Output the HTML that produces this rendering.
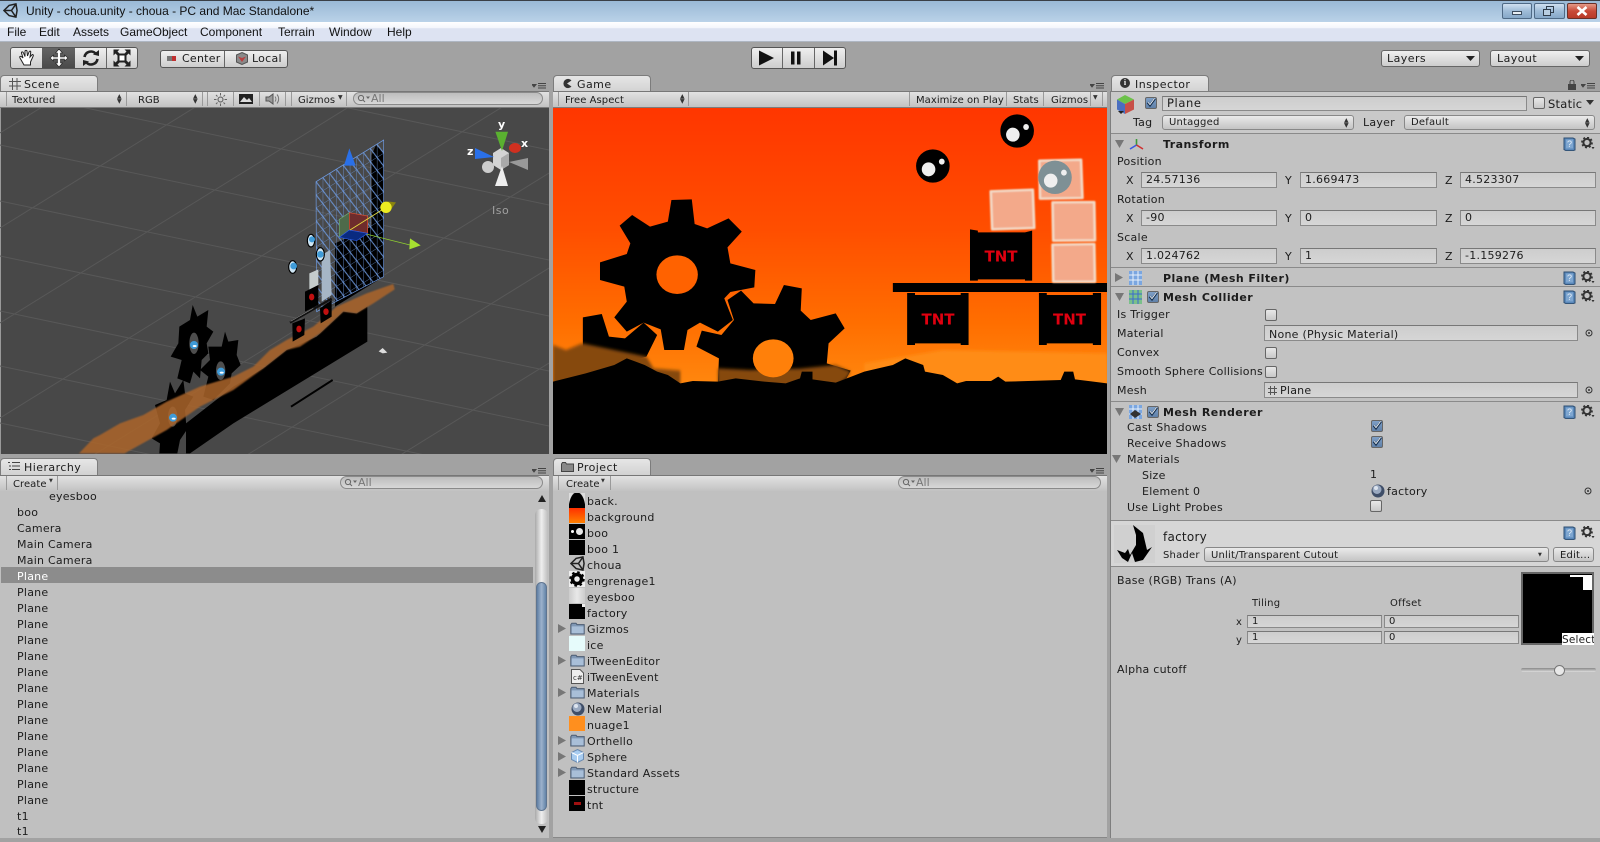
<!DOCTYPE html>
<html><head><meta charset="utf-8"><style>
html,body{margin:0;padding:0;width:1600px;height:842px;overflow:hidden;background:#a2a2a2}
body{position:relative;font:11px "DejaVu Sans",sans-serif;color:#1c1c1c}
div,span,svg{position:absolute}
.t{white-space:nowrap;line-height:16px;letter-spacing:.25px;color:#1c1c1c;margin-top:1px}
.s{font-size:10px;letter-spacing:.05px}
.m{white-space:nowrap;line-height:16px;font:12px/16px "Liberation Sans",sans-serif;top:24px;color:#111}
.b{font-weight:bold;letter-spacing:.45px}
.btn{background:linear-gradient(#efefef,#cdcdcd);border:1px solid #555;box-sizing:border-box}
.tab{background:linear-gradient(#e6e6e6,#d2d2d2);border:1px solid #7c7c7c;border-bottom:0;border-radius:4px 4px 0 0;box-sizing:border-box;height:17px}
.bar{background:linear-gradient(#e2e2e2,#c2c2c2);border-top:1px solid #777;border-bottom:1px solid #7c7c7c;box-sizing:border-box;height:17px}
.sep{width:1px;background:#9a9a9a;top:1px;height:14px}
.srch{height:13px;border:1px solid #8a8a8a;border-radius:7px;box-sizing:border-box;background:linear-gradient(#bdbdbd,#d8d8d8);color:#777;font-size:11px;line-height:12px;padding-left:17px}
.f{height:16px;box-sizing:border-box;background:linear-gradient(#cdcdcd,#d6d6d6);border:1px solid #8a8a8a;border-top-color:#777;line-height:14px;padding-left:4px;letter-spacing:.25px;white-space:nowrap;overflow:hidden}
.dd{height:15px;box-sizing:border-box;background:linear-gradient(#eaeaea,#c4c4c4);border:1px solid #888;border-radius:3px;line-height:14px;padding-left:6px;font-size:10px;letter-spacing:.2px}
.ln{height:1px;background:#8a8a8a;left:1111px;width:489px}
.cb{width:12px;height:12px;box-sizing:border-box;border:1px solid #666;border-radius:2px;background:linear-gradient(#e8e8e8,#c8c8c8)}
.ck{background:linear-gradient(#7e9fc6,#5f80a8)}
.arr{color:#333;font-size:7px;line-height:8px}
.w{top:3px;height:16px;box-sizing:border-box;border:1px solid #4f6a86;border-radius:2px;background:linear-gradient(#cfe0f0,#9fbcd8 50%,#86a8c8)}
.thumb{left:569px;width:16px;height:15px;background:#000}
</style></head><body>
<svg width="0" height="0" style="left:0;top:0"><defs>
<symbol id="help" viewBox="0 0 13 14"><path d="M1 1h9l2 1v11l-2 0.6H3l-2-1z" fill="#5a88ba" stroke="#2f4f72"/><rect x="3" y="2.5" width="7" height="9" fill="#7ea6d0"/><text x="6.5" y="10" font-size="9" text-anchor="middle" fill="#e8f0f8" font-family="Liberation Sans">?</text></symbol>
<symbol id="gear" viewBox="0 0 14 13"><circle cx="6" cy="5.5" r="3.6" fill="none" stroke="#333" stroke-width="2"/><circle cx="6" cy="5.5" r="5" fill="none" stroke="#333" stroke-width="1.8" stroke-dasharray="2 1.9"/><path d="M10.5 10h3l-1.5 2.2z" fill="#333"/></symbol>
<symbol id="tick" viewBox="0 0 12 12"><path d="M2.6 5.5 5 8.4 10 1.6" fill="none" stroke="#173150" stroke-width="2.2"/><path d="M3 5.2 5 7.6 9.6 1.4" fill="none" stroke="#fff" stroke-width=".8"/></symbol>
<symbol id="folder" viewBox="0 0 15 13"><path d="M.8 12V2.6l1-1.4h4.2l1 1.4h7.2V12z" fill="#7f97b4" stroke="#4c5c72"/><path d="M1.6 4.4h12V11.4H1.6z" fill="#a9bfd8"/></symbol>
<symbol id="unity" viewBox="0 0 16 16"><path d="M1 8 6.5 2.6 13.8 1 15 8 13.8 15 6.5 13.4z" fill="none" stroke="#222" stroke-width="1.6"/><path d="M1 8H9L13.8 1M9 8 13.8 15" fill="none" stroke="#222" stroke-width="1.6"/></symbol>
<symbol id="tr" viewBox="0 0 8 9"><path d="M0 0 8 4.500 0 9z" fill="#777"/></symbol>
<symbol id="td" viewBox="0 0 9 8"><path d="M0 0H9L4.500 8z" fill="#777"/></symbol>
<symbol id="opt" viewBox="0 0 15 6"><path d="M0 1.500H4L2 4zM6 .5h8M6 2.700h8M6 5h8" stroke="#444" fill="#444"/></symbol>
<symbol id="ball" viewBox="0 0 14 14"><circle cx="7" cy="7" r="6.500" fill="#3f4e68"/><circle cx="6" cy="5.500" r="4.500" fill="#9aa9c0"/><circle cx="5" cy="4" r="2" fill="#dde4ee"/></symbol>
<symbol id="dot" viewBox="0 0 8 8"><circle cx="4" cy="4" r="3" fill="none" stroke="#333"/><circle cx="4" cy="4" r="1" fill="#333"/></symbol>
</defs></svg>

<!-- title + menu -->
<div style="left:0;top:0;width:1600px;height:22px;background:linear-gradient(#9ab9d6,#bad2e8);border-top:1px solid #3a3f46;box-sizing:border-box"></div>
<svg style="left:3px;top:3px" width="15" height="15"><use href="#unity" width="15" height="15"/></svg>
<div class="m" style="left:26px;top:3px;font-size:12px;color:#111">Unity - choua.unity - choua - PC and Mac Standalone*</div>
<div style="left:0;top:22px;width:1600px;height:20px;background:linear-gradient(#fff,#f4f6fc 30%,#dde3f2 35%,#dde3f2);border-bottom:1px solid #aeb6c2;box-sizing:border-box"></div>
<div class="m" style="left:7px">File</div><div class="m" style="left:39px">Edit</div><div class="m" style="left:73px">Assets</div><div class="m" style="left:120px">GameObject</div><div class="m" style="left:200px">Component</div><div class="m" style="left:278px">Terrain</div><div class="m" style="left:329px">Window</div><div class="m" style="left:387px">Help</div>
<div class="w" style="left:1502px;width:30px"></div><div style="left:1512px;top:11px;width:10px;height:4px;border:1px solid #3c4c5e;background:#e8eef4;box-sizing:border-box"></div>
<div class="w" style="left:1534px;width:31px"></div><div style="left:1546px;top:6px;width:8px;height:7px;border:1px solid #2f3c4a;box-sizing:border-box"></div><div style="left:1543px;top:9px;width:8px;height:7px;border:1px solid #2f3c4a;background:#b8cde0;box-sizing:border-box"></div>
<div class="w" style="left:1567px;width:30px;background:linear-gradient(#e49a88,#c84a38 50%,#b83a28);border-color:#6a3028"></div>
<svg style="left:1576px;top:6px" width="12" height="10"><path d="M1.500 1 10.500 9M10.500 1 1.500 9" stroke="#fff" stroke-width="2.600"/></svg>

<!-- tools -->
<div class="btn" style="left:10px;top:47px;width:128px;height:22px;border-radius:3px"></div>
<div style="left:42px;top:48px;width:33px;height:20px;background:linear-gradient(#646464,#4a4a4a)"></div>
<div style="left:106px;top:48px;width:1px;height:20px;background:#666"></div>
<svg style="left:16px;top:48px" width="22" height="20"><path d="M8 17 4 10c-1-2 1-2 2-1l1 1L5.500 5c0-1.500 1.500-1.500 2 0L9 8.500 9 3.500c0-1.500 2-1.500 2 0L11.500 8 13 4c.5-1.500 2-1 1.700.5L14 9l1.800-2c1-1 2 0 1.400 1L14.500 14V17z" fill="#fff" stroke="#222" stroke-width="1"/></svg>
<svg style="left:48px;top:48px" width="22" height="20"><path d="M11 1 14.500 5H12.500V9H16.500V7L20 10 16.500 13V11H12.500V15H14.500L11 19 7.500 15H9.500V11H5.500V13L2 10 5.500 7V9H9.500V5H7.500z" fill="#fff" stroke="#222" stroke-width=".6"/></svg>
<svg style="left:80px;top:49px" width="22" height="18"><path d="M4.500 8a6.500 6.500 0 0 1 11.500-3M17.500 10a6.500 6.500 0 0 1-11.500 3" fill="none" stroke="#222" stroke-width="2.600"/><path d="M13 5.500 19 7V1zM9 12.500 3 11V17z" fill="#222"/></svg>
<svg style="left:112px;top:48px" width="20" height="20"><path d="M1.500 1.500h6L5.500 3.500 8 6 6 8 3.500 5.500 1.500 7.500zM18.500 1.500v6L16.500 5.500 14 8 12 6 14.500 3.500 12.500 1.500zM1.500 18.500v-6L3.500 14.500 6 12 8 14 5.500 16.500 7.500 18.500zM18.500 18.500h-6L14.500 16.500 12 14 14 12 16.500 14.500 18.500 12.500z" fill="#222"/><rect x="6.500" y="6.500" width="7" height="7" fill="#fff" stroke="#222" stroke-width="2"/></svg>
<div class="btn" style="left:160px;top:50px;width:128px;height:18px;border-radius:3px"></div><div style="left:224px;top:51px;width:1px;height:16px;background:#666"></div>
<div style="left:167px;top:56px;width:5px;height:5px;background:#777"></div><div style="left:172px;top:56px;width:4px;height:5px;background:#c03030"></div>
<div class="t" style="left:182px;top:50px">Center</div>
<svg style="left:236px;top:52px" width="12" height="13"><path d="M6 .5 11.500 3V10L6 12.500.5 10V3z" fill="#8a8a8a" stroke="#555"/><path d="M2 4.500 6 6 10 4.500 6 10z" fill="#b84040"/></svg>
<div class="t" style="left:252px;top:50px">Local</div>
<div class="btn" style="left:751px;top:47px;width:95px;height:22px;border-radius:3px"></div><div style="left:782px;top:48px;width:1px;height:20px;background:#666"></div><div style="left:814px;top:48px;width:1px;height:20px;background:#666"></div>
<svg style="left:758px;top:50px" width="82" height="16"><path d="M1 .5 16 8 1 15.500z" fill="#111"/><rect x="33" y="1.500" width="3.500" height="13" fill="#111"/><rect x="39" y="1.500" width="3.500" height="13" fill="#111"/><path d="M65 .5 76 8 65 15.500z" fill="#111"/><rect x="76" y=".5" width="3" height="15" fill="#111"/></svg>
<div class="btn" style="left:1381px;top:50px;width:99px;height:17px;border-radius:3px;border-color:#666"></div><div class="t" style="left:1387px;top:50px;letter-spacing:.45px">Layers</div><svg style="left:1466px;top:56px" width="9" height="6"><path d="M0 0H9L4.500 5z" fill="#222"/></svg>
<div class="btn" style="left:1490px;top:50px;width:100px;height:17px;border-radius:3px;border-color:#666"></div><div class="t" style="left:1497px;top:50px;letter-spacing:.45px">Layout</div><svg style="left:1575px;top:56px" width="9" height="6"><path d="M0 0H9L4.500 5z" fill="#222"/></svg>

<!-- SCENE -->
<div class="tab" style="left:0;top:75px;width:98px"></div>
<svg style="left:9px;top:78px" width="12" height="12"><path d="M3.500 0V12M8 0V12M0 3.500H12M0 8H12" stroke="#555"/></svg>
<div class="t" style="left:24px;top:76px;letter-spacing:.45px">Scene</div>
<svg style="left:532px;top:83px" width="15" height="6"><use href="#opt" width="15" height="6"/></svg>
<div class="bar" style="left:0;top:91px;width:549px"></div>
<div class="sep" style="left:6px;top:92px"></div><div class="t s" style="left:12px;top:92px">Textured</div><div class="arr" style="left:117px;top:94px;font-size:6px;line-height:5px">▲<br>▼</div>
<div class="sep" style="left:126px;top:92px"></div><div class="t s" style="left:138px;top:92px">RGB</div><div class="arr" style="left:193px;top:94px;font-size:6px;line-height:5px">▲<br>▼</div>
<div class="sep" style="left:202px;top:92px"></div><div class="sep" style="left:207px;top:92px"></div><div class="sep" style="left:233px;top:92px"></div><div class="sep" style="left:259px;top:92px"></div><div class="sep" style="left:285px;top:92px"></div><div class="sep" style="left:291px;top:92px"></div>
<svg style="left:214px;top:93px" width="13" height="13"><circle cx="6.500" cy="6.500" r="2.500" fill="none" stroke="#555"/><path d="M6.500 0V2.500M6.500 10.500V13M0 6.500H2.500M10.500 6.500H13M2 2 3.500 3.500M9.500 9.500 11 11M11 2 9.500 3.500M3.500 9.500 2 11" stroke="#666"/></svg>
<svg style="left:239px;top:94px" width="14" height="10"><rect width="14" height="10" fill="#222"/><path d="M1 8 5 3 8 6 10 4 13 8z" fill="#ddd"/></svg>
<svg style="left:265px;top:93px" width="15" height="12"><path d="M1 4H4L8 1V11L4 8H1z" fill="#999" stroke="#555"/><path d="M10 3.500a4 4 0 0 1 0 5M12 1.500a7 7 0 0 1 0 9" fill="none" stroke="#777"/></svg>
<div class="t s" style="left:298px;top:92px">Gizmos</div><div class="arr" style="left:338px;top:94px;font-size:6px">▼</div>
<div class="sep" style="left:346px;top:92px"></div><div class="srch" style="left:353px;top:92px;width:190px">All</div>
<svg style="left:357px;top:94px" width="14" height="9"><circle cx="4" cy="4" r="2.600" fill="none" stroke="#666"/><path d="M6 6 8 8" stroke="#666"/><path d="M9 2.500h4L11 5z" fill="#666"/></svg>

<svg style="left:0;top:108px" width="549" height="346" viewBox="0 108 549 346">
<defs><filter id="sf"><feGaussianBlur stdDeviation="2"/></filter></defs>
<rect x="0" y="108" width="549" height="346" fill="#484848"/>
<rect x="0" y="108" width="1" height="346" fill="#9a9a9a"/>
<g stroke="#585858" stroke-width="1">
<path d="M0 90 549 205M0 145 549 260M0 201 549 316M0 256 549 371M0 311 549 426M0 366 549 481M0 423 549 538M0 35 549 150"/>
<path d="M0 133 215 0M0 228 549 -112M0 323 549 -17M0 418 549 78M0 513 549 173M0 608 549 268M0 703 549 363"/>
</g>
<g transform="translate(100,130) scale(.33333)">
<defs><pattern id="pl" patternUnits="userSpaceOnUse" width="20.300" height="39" patternTransform="translate(648,155) skewY(-31.600)"><path d="M0 0H20.300M0 0V39M0 0 20.300 39" stroke="#6e9ae0" stroke-width="2.200" fill="none"/></pattern></defs>
<path d="M815 75 828 45 851 70V440L705 530V340L815 290z" fill="#000"/>
<path d="M278 525 292 560 325 540 320 590 340 605 320 640 325 670 305 690 300 745 280 725 270 760 232 745 245 690 212 680 235 640 238 590 270 570z" fill="#000"/><ellipse cx="282" cy="640" rx="14" ry="32" fill="#4e4e4e"/>
<path d="M375 605 385 635 415 630 410 675 422 705 395 730 390 760 340 810 310 800 325 740 300 720 330 690 325 650 365 650z" fill="#000"/><ellipse cx="362" cy="722" rx="14" ry="28" fill="#4e4e4e"/>
<path d="M210 755 225 790 250 750 255 790 280 800 255 840 260 900 240 930 232 970H178L180 940 155 925 180 880 165 825 200 810z" fill="#000"/><ellipse cx="218" cy="860" rx="14" ry="30" fill="#4e4e4e"/>
<path d="M258 970V880L400 770 490 715 560 660 650 620 730 545 770 550 802 530V635L400 880 270 970z" fill="#000"/>
<path d="M-63 970-20 925 0 915 60 880 130 855 200 815 300 770 400 740 460 710 510 660 560 630 640 590 710 530 800 490 880 462 884 478 820 520 770 550 730 545 660 610 600 650 560 660 490 715 400 780 300 830 200 900 74 970z" fill="#ab652b" opacity=".86" filter="url(#sf)"/>
<path d="M573 830 698 750" stroke="#000" stroke-width="6"/>
<path d="M648 155 851 30V440L650 545z" fill="url(#pl)" stroke="#6e9ae0" stroke-width="2"/>
<path d="M628 430 655 418V465L628 480z" fill="#c4cccc"/><path d="M665 375 690 360 695 495 665 515z" fill="#a6b6c6"/>
<g fill="#000"><path d="M615 485 655 465V525L615 545z"/><path d="M660 535 695 510V560L662 580z"/><path d="M577 580 615 565 613 615 578 635z"/></g>
<g fill="#c01010"><ellipse cx="635" cy="501" rx="8" ry="10"/><ellipse cx="678" cy="545" rx="8" ry="10"/><ellipse cx="597" cy="597" rx="8" ry="10"/></g>
<path d="M570 578 695 506" stroke="#111" stroke-width="7"/><path d="M572 574 640 535" stroke="#aaa" stroke-width="1.500"/>
<g stroke="#000" stroke-width="3.500" fill="#cfe6f4"><ellipse cx="633" cy="332" rx="11" ry="19"/><ellipse cx="661" cy="373" rx="12" ry="20"/><ellipse cx="578" cy="411" rx="12" ry="19"/></g>
<g fill="#3f9bd8"><circle cx="636" cy="328" r="9"/><circle cx="661" cy="373" r="10"/><circle cx="581" cy="408" r="10"/><circle cx="282" cy="645" r="12"/><circle cx="363" cy="725" r="12"/><circle cx="219" cy="863" r="12"/></g>
<g fill="#fff"><ellipse cx="284" cy="648" rx="6" ry="3"/><ellipse cx="365" cy="728" rx="6" ry="3"/><ellipse cx="221" cy="866" rx="6" ry="3"/></g>
<path d="M750 300 930 345" stroke="#90d030" stroke-width="2.500"/><path d="M930 325 962 346 928 358z" fill="#a6e030"/>
<path d="M748 55 767 107H732z" fill="#2a70e8"/>
<path d="M718 268 748 248V300L718 322z" fill="#4e6a4a" stroke="#70a870" stroke-width="2"/><path d="M748 248 803 258V310L748 300z" fill="#6e2c2c" stroke="#e05030" stroke-width="2"/><path d="M718 322 748 300 803 310 770 332z" fill="#0a2a80" stroke="#2a5ae0" stroke-width="2"/>
<path d="M750 300 858 232" stroke="#e8e040" stroke-width="2.500"/><path d="M862 214 888 217 872 240z" fill="#8a8410"/><circle cx="858" cy="232" r="17" fill="#ecec20"/>
<path d="M836 664 848 654 862 668 848 670z" fill="#ddd"/>
</g>
<path d="M493 153 501 148 509 153V165L501 170 493 165z" fill="#d4d4d4"/><path d="M501 158 509 153V165L501 170z" fill="#aaa"/>
<path d="M495.400 131.700H508L502 151z" fill="#5ab030"/><ellipse cx="515" cy="148" rx="6" ry="5" fill="#d03020"/>
<path d="M494 157 475 148V159z" fill="#2a70e8"/><path d="M509 162 528 158V170z" fill="#999"/><path d="M502 166 495 186H508z" fill="#eee"/><circle cx="488" cy="167" r="6" fill="#ccc"/>
<g font-family="DejaVu Sans" font-weight="bold" font-size="11" fill="#fff"><text x="498" y="128">y</text><text x="521" y="147">x</text><text x="467" y="155">z</text></g>
<text x="492" y="214" font-family="DejaVu Sans" font-size="11" fill="#a0a0a0" letter-spacing=".5">Iso</text>
</svg>

<!-- GAME -->
<div class="tab" style="left:553px;top:75px;width:98px"></div>
<svg style="left:562px;top:78px" width="11" height="11"><path d="M9.500 2.500A4.600 4.600 0 1 0 9.500 8.500L5 5.500z" fill="#333"/></svg>
<div class="t" style="left:577px;top:76px;letter-spacing:.45px">Game</div>
<svg style="left:1090px;top:83px" width="15" height="6"><use href="#opt" width="15" height="6"/></svg>
<div class="bar" style="left:553px;top:91px;width:554px"></div>
<div class="sep" style="left:558px;top:92px"></div><div class="t s" style="left:565px;top:92px">Free Aspect</div><div class="arr" style="left:680px;top:94px;font-size:6px;line-height:5px">▲<br>▼</div><div class="sep" style="left:688px;top:92px"></div>
<div class="sep" style="left:909px;top:92px"></div><div class="t s" style="left:916px;top:92px">Maximize on Play</div><div class="sep" style="left:1006px;top:92px"></div><div class="t s" style="left:1013px;top:92px">Stats</div><div class="sep" style="left:1043px;top:92px"></div><div class="t s" style="left:1051px;top:92px">Gizmos</div><div class="sep" style="left:1090px;top:92px"></div><div class="arr" style="left:1093px;top:94px;font-size:6px">▼</div><div class="sep" style="left:1102px;top:92px"></div>

<svg style="left:553px;top:108px" width="554" height="346" viewBox="553 108 554 346">
<defs><linearGradient id="sky" x1="0" y1="0" x2="0" y2="1"><stop offset="0" stop-color="#ff3600"/><stop offset=".35" stop-color="#ff4e00"/><stop offset=".62" stop-color="#ff6e00"/><stop offset=".82" stop-color="#ff8a10"/><stop offset="1" stop-color="#ff8a10"/></linearGradient><filter id="bb" x="-10%" y="-30%" width="120%" height="160%"><feGaussianBlur stdDeviation="4 5"/></filter><filter id="ib"><feGaussianBlur stdDeviation="2"/></filter></defs>
<rect x="553" y="108" width="554" height="346" fill="url(#sky)"/>
<g transform="translate(550,100) scale(.35714,.33333)">
<path d="M92 652 145 642 165 710 210 715 262 668 300 705 270 770 180 795 92 790z" fill="#000"/>
<path d="M8 735 45 750 90 730 180 750 270 770 290 805 365 812V860H8z" fill="#86480f" filter="url(#bb)"/>
<path d="M655 555 705 565 702 632 730 660 800 640 825 685 780 730 775 790 842 812 830 835 800 850H470L473 775 410 740 425 692 480 705 515 660 497 600 535 572 570 610 630 612z" fill="#000"/>
<path d="M470 805 560 810 700 806 800 795 842 815 830 835 800 860H470z" fill="#86480f" filter="url(#bb)"/>
<circle cx="625" cy="775" r="57" fill="#ff800a"/>
<path d="M340 300 397 298 405 372 440 385 500 355 537 395 497 442 505 490 575 510 572 562 505 576 488 595 512 660 470 695 420 668 385 690 375 750H320L310 688 262 668 215 695 180 652 215 605 208 560 140 540V487L215 462 225 430 195 377 230 345 280 380 330 365z" fill="#000"/>
<circle cx="356" cy="524" r="58" fill="#ff6200"/>
<path d="M880 790 1100 750 1560 760V850H880z" fill="#ff8c14" filter="url(#bb)"/>
<path d="M8 845 100 820 180 795 215 775 265 795 300 815 330 825 365 850 400 843 470 845 520 835 600 845 660 850 700 835 705 815 735 815 735 838 800 848 880 815 960 795 995 775 1045 795 1050 815 1100 825 1140 850 1165 843 1235 843 1255 830 1275 845 1430 840 1440 815 1465 815 1470 838 1560 850V1062H8z" fill="#000"/>
<g fill="#000"><path d="M1176 388 1198 392V397H1330L1350 392V542H1330V538H1198V542H1176z"/><rect x="960" y="549" width="600" height="27"/><path d="M1000 579H1022V585H1150V579H1172V735H1150V730H1022V735H1000z"/><path d="M1369 579H1391V585H1520V579H1543V735H1520V730H1391V735H1369z"/></g>
<g stroke="#f3dbc8" stroke-width="7" fill="#f3a98a" stroke-linejoin="round" filter="url(#ib)"><path d="M1234 274 1352 269 1356 384 1238 388z"/><path d="M1370 182 1487 179 1491 294 1372 296z"/><path d="M1407 307 1524 306 1526 421 1409 422z"/><path d="M1407 434 1524 432 1526 545 1409 545z"/></g>
<ellipse cx="1072" cy="198" rx="47" ry="50" fill="#000"/><ellipse cx="1308" cy="93" rx="47" ry="50" fill="#000"/><ellipse cx="1414" cy="232" rx="47" ry="50" fill="#7e9095"/>
<g fill="#efefef"><ellipse cx="1060" cy="208" rx="19" ry="21"/><ellipse cx="1296" cy="104" rx="19" ry="21"/><ellipse cx="1402" cy="242" rx="19" ry="21"/><ellipse cx="1097" cy="185" rx="8" ry="9"/><ellipse cx="1333" cy="81" rx="8" ry="9"/><ellipse cx="1439" cy="218" rx="8" ry="9"/></g>
</g>
<g font-family="DejaVu Sans" font-weight="bold" font-size="15" fill="#e00010" text-anchor="middle"><text x="1001" y="261.500">TNT</text><text x="938" y="324.500">TNT</text><text x="1069.500" y="324.500">TNT</text></g>
</svg>

<!-- HIERARCHY -->
<div class="tab" style="left:0;top:458px;width:98px"></div>
<svg style="left:8px;top:461px" width="12" height="10"><path d="M4 1.500H12M4 5H12M4 8.500H12M0 1.500H2M1 5H3M1 8.500H3" stroke="#444"/></svg>
<div class="t" style="left:24px;top:459px;letter-spacing:.45px">Hierarchy</div>
<svg style="left:532px;top:468px" width="15" height="6"><use href="#opt" width="15" height="6"/></svg>
<div class="bar" style="left:0;top:475px;width:549px"></div><div class="sep" style="left:6px;top:476px"></div><div class="sep" style="left:57px;top:476px"></div>
<div class="t s" style="left:13px;top:476px">Create</div><div class="arr" style="left:49px;top:477px;font-size:5px">▼</div>
<div class="srch" style="left:340px;top:476px;width:203px">All</div>
<svg style="left:344px;top:478px" width="14" height="9"><circle cx="4" cy="4" r="2.600" fill="none" stroke="#666"/><path d="M6 6 8 8" stroke="#666"/><path d="M9 2.500h4L11 5z" fill="#666"/></svg>
<div style="left:0;top:491px;width:549px;height:347px;background:#c0c0c0;overflow:hidden">
<div style="left:1px;top:76px;width:532px;height:16px;background:#8c8c8c"></div>
<div class="t" style="left:49px;top:-3px">eyesboo</div>
<div class="t" style="left:17px;top:13px">boo</div><div class="t" style="left:17px;top:29px">Camera</div><div class="t" style="left:17px;top:45px">Main Camera</div><div class="t" style="left:17px;top:61px">Main Camera</div>
<div class="t" style="left:17px;top:77px;color:#fff">Plane</div><div class="t" style="left:17px;top:93px">Plane</div><div class="t" style="left:17px;top:109px">Plane</div><div class="t" style="left:17px;top:125px">Plane</div><div class="t" style="left:17px;top:141px">Plane</div><div class="t" style="left:17px;top:157px">Plane</div><div class="t" style="left:17px;top:173px">Plane</div><div class="t" style="left:17px;top:189px">Plane</div><div class="t" style="left:17px;top:205px">Plane</div><div class="t" style="left:17px;top:221px">Plane</div><div class="t" style="left:17px;top:237px">Plane</div><div class="t" style="left:17px;top:253px">Plane</div><div class="t" style="left:17px;top:269px">Plane</div><div class="t" style="left:17px;top:285px">Plane</div><div class="t" style="left:17px;top:301px">Plane</div>
<div class="t" style="left:17px;top:317px">t1</div><div class="t" style="left:17px;top:333px;line-height:13px">t1</div>
<div style="left:535px;top:18px;width:13px;height:315px;border-radius:6px;background:linear-gradient(90deg,#aaa,#efefef 50%,#bcbcbc)"></div>
<div style="left:536px;top:91px;width:11px;height:229px;border-radius:6px;border:1px solid #5f7590;box-sizing:border-box;background:linear-gradient(90deg,#5f7ea3,#9cb2cc 50%,#6484a8)"></div>
<svg style="left:538px;top:4px" width="8" height="7"><path d="M4 0 8 7H0z" fill="#222"/></svg>
<svg style="left:538px;top:335px" width="8" height="7"><path d="M4 7 8 0H0z" fill="#222"/></svg>
</div>

<!-- PROJECT -->
<div class="tab" style="left:553px;top:458px;width:98px"></div>
<svg style="left:561px;top:462px" width="13" height="10"><path d="M.5 9.500V2l1-1.500h3L5.500 2h7v7.500z" fill="#888" stroke="#444"/></svg>
<div class="t" style="left:577px;top:459px;letter-spacing:.45px">Project</div>
<svg style="left:1090px;top:468px" width="15" height="6"><use href="#opt" width="15" height="6"/></svg>
<div class="bar" style="left:553px;top:475px;width:554px"></div><div class="sep" style="left:558px;top:476px"></div><div class="sep" style="left:610px;top:476px"></div>
<div class="t s" style="left:566px;top:476px">Create</div><div class="arr" style="left:601px;top:477px;font-size:5px">▼</div>
<div class="srch" style="left:898px;top:476px;width:203px">All</div>
<svg style="left:902px;top:478px" width="14" height="9"><circle cx="4" cy="4" r="2.600" fill="none" stroke="#666"/><path d="M6 6 8 8" stroke="#666"/><path d="M9 2.500h4L11 5z" fill="#666"/></svg>
<div style="left:553px;top:491px;width:554px;height:347px;background:#c0c0c0;border-bottom:1px solid #888;box-sizing:border-box"></div>
<div class="t" style="left:587px;top:493px">back.</div><div class="t" style="left:587px;top:509px">background</div><div class="t" style="left:587px;top:525px">boo</div><div class="t" style="left:587px;top:541px">boo 1</div><div class="t" style="left:587px;top:557px">choua</div><div class="t" style="left:587px;top:573px">engrenage1</div><div class="t" style="left:587px;top:589px">eyesboo</div><div class="t" style="left:587px;top:605px">factory</div><div class="t" style="left:587px;top:621px">Gizmos</div><div class="t" style="left:587px;top:637px">ice</div><div class="t" style="left:587px;top:653px">iTweenEditor</div><div class="t" style="left:587px;top:669px">iTweenEvent</div><div class="t" style="left:587px;top:685px">Materials</div><div class="t" style="left:587px;top:701px">New Material</div><div class="t" style="left:587px;top:717px">nuage1</div><div class="t" style="left:587px;top:733px">Orthello</div><div class="t" style="left:587px;top:749px">Sphere</div><div class="t" style="left:587px;top:765px">Standard Assets</div><div class="t" style="left:587px;top:781px">structure</div><div class="t" style="left:587px;top:797px">tnt</div>
<!-- thumbs -->
<div class="thumb" style="top:493px;background:radial-gradient(ellipse at 50% 110%,#000 72%,#ddd 76%)"></div>
<div class="thumb" style="top:508px;background:linear-gradient(#ff3000,#ff8000)"></div>
<div class="thumb" style="top:524px"></div><div style="left:571px;top:530px;width:3px;height:3px;border-radius:50%;background:#fff"></div><div style="left:576px;top:528px;width:7px;height:7px;border-radius:50%;background:#e8e8e8"></div>
<div class="thumb" style="top:540px"></div>
<svg style="left:570px;top:556px" width="15" height="15"><use href="#unity" width="15" height="15"/></svg>
<svg style="left:569px;top:571px" width="16" height="16"><rect width="16" height="16" fill="#eee"/><circle cx="8" cy="8" r="4.500" fill="none" stroke="#000" stroke-width="3.500"/><circle cx="8" cy="8" r="6.500" fill="none" stroke="#000" stroke-width="2.500" stroke-dasharray="2.500 2.600"/></svg>
<div class="thumb" style="top:588px;background:linear-gradient(90deg,#ccc,#e8e8e8,#ccc)"></div>
<div class="thumb" style="top:604px"></div><div style="left:582px;top:604px;width:3px;height:3px;background:#eee"></div>
<svg style="left:570px;top:622px" width="15" height="13"><use href="#folder" width="15" height="13"/></svg><svg style="left:558px;top:624px" width="8" height="9"><use href="#tr" width="8" height="9"/></svg>
<div class="thumb" style="top:636px;background:#e6fbfb"></div>
<svg style="left:570px;top:654px" width="15" height="13"><use href="#folder" width="15" height="13"/></svg><svg style="left:558px;top:656px" width="8" height="9"><use href="#tr" width="8" height="9"/></svg>
<svg style="left:571px;top:669px" width="13" height="15"><path d="M.5.5H9L12.500 4V14.500H.5z" fill="#eee" stroke="#555"/><text x="2" y="11" font-size="7" font-family="DejaVu Sans" fill="#333">c#</text></svg>
<svg style="left:570px;top:686px" width="15" height="13"><use href="#folder" width="15" height="13"/></svg><svg style="left:558px;top:688px" width="8" height="9"><use href="#tr" width="8" height="9"/></svg>
<svg style="left:571px;top:702px" width="14" height="14"><use href="#ball" width="14" height="14"/></svg>
<div class="thumb" style="top:716px;background:#ff8f1e"></div>
<svg style="left:570px;top:734px" width="15" height="13"><use href="#folder" width="15" height="13"/></svg><svg style="left:558px;top:736px" width="8" height="9"><use href="#tr" width="8" height="9"/></svg>
<svg style="left:571px;top:749px" width="13" height="14"><path d="M6.500.5 12.500 3.500V10.500L6.500 13.500.5 10.500V3.500z" fill="#a8ccf0" stroke="#6a8ab0"/><path d="M.5 3.500 6.500 6.500 12.500 3.500M6.500 6.500V13.500" fill="none" stroke="#fff"/></svg><svg style="left:558px;top:752px" width="8" height="9"><use href="#tr" width="8" height="9"/></svg>
<svg style="left:570px;top:766px" width="15" height="13"><use href="#folder" width="15" height="13"/></svg><svg style="left:558px;top:768px" width="8" height="9"><use href="#tr" width="8" height="9"/></svg>
<div class="thumb" style="top:780px"></div>
<div class="thumb" style="top:796px"></div><div style="left:574px;top:802px;width:7px;height:3px;background:#a01010"></div>

<!-- INSPECTOR -->
<div class="tab" style="left:1111px;top:75px;width:98px"></div>
<div style="left:1120px;top:78px;width:10px;height:10px;border-radius:50%;background:#333;color:#fff;font:bold 8px/10px 'Liberation Serif';text-align:center">i</div>
<div class="t" style="left:1135px;top:76px;letter-spacing:.45px">Inspector</div>
<svg style="left:1568px;top:80px" width="9" height="10"><rect y="4" width="8" height="6" fill="#444"/><path d="M2 4V2a2 2 0 0 1 4 0V4" fill="none" stroke="#444"/></svg>
<svg style="left:1581px;top:83px" width="15" height="6"><use href="#opt" width="15" height="6"/></svg>
<div style="left:1110px;top:91px;width:490px;height:747px;background:#c2c2c2;border-left:1px solid #7e7e7e;border-top:1px solid #7e7e7e;box-sizing:border-box"></div>
<div style="left:1111px;top:92px;width:489px;height:41px;background:#c9c9c9"></div>
<svg style="left:1116px;top:94px" width="19" height="23"><path d="M9 1 18 5.500 9 10 1 5.500z" fill="#6cc24a"/><path d="M1 5.500 9 10V20L1 15.500z" fill="#4a6ec0"/><path d="M18 5.500 9 10V20L18 15.500z" fill="#c85048"/><path d="M2 17h6l-3 3z" fill="#222"/></svg>
<div class="cb ck" style="left:1145px;top:97px"></div><svg style="left:1145px;top:97px" width="12" height="12"><use href="#tick" width="12" height="12"/></svg>
<div class="f" style="left:1162px;top:96px;width:365px;height:15px;font-size:11.500px;line-height:13px;letter-spacing:.6px">Plane</div>
<div class="cb" style="left:1533px;top:97px"></div><div class="t" style="left:1548px;top:95px;font-size:11.500px">Static</div>
<svg style="left:1586px;top:100px" width="8" height="6"><path d="M0 0H8L4 5z" fill="#333"/></svg>
<div class="t" style="left:1133px;top:114px">Tag</div><div class="dd" style="left:1162px;top:115px;width:192px">Untagged</div><div class="arr" style="left:1344px;top:118px;font-size:6px;line-height:5px">▲<br>▼</div>
<div class="t" style="left:1363px;top:114px">Layer</div><div class="dd" style="left:1404px;top:115px;width:191px">Default</div><div class="arr" style="left:1585px;top:118px;font-size:6px;line-height:5px">▲<br>▼</div>
<div class="ln" style="top:133px"></div>
<!-- transform -->
<svg style="left:1115px;top:140px" width="9" height="8"><use href="#td" width="9" height="8"/></svg>
<svg style="left:1129px;top:138px" width="15" height="12"><path d="M7.500 7V1" stroke="#3a9a3a" stroke-width="1.600"/><path d="M7.500 7 1 11" stroke="#3a5ae0" stroke-width="1.600"/><path d="M7.500 7 14 11" stroke="#d03030" stroke-width="1.600"/></svg>
<div class="t b" style="left:1163px;top:136px">Transform</div>
<svg style="left:1563px;top:137px" width="13" height="14"><use href="#help" width="13" height="14"/></svg><svg style="left:1581px;top:137px" width="14" height="13"><use href="#gear" width="14" height="13"/></svg>
<div class="t" style="left:1117px;top:153px">Position</div>
<div class="t" style="left:1126px;top:172px">X</div><div class="f" style="left:1141px;top:172px;width:136px">24.57136</div><div class="t" style="left:1285px;top:172px">Y</div><div class="f" style="left:1300px;top:172px;width:137px">1.669473</div><div class="t" style="left:1445px;top:172px">Z</div><div class="f" style="left:1460px;top:172px;width:136px">4.523307</div>
<div class="t" style="left:1117px;top:191px">Rotation</div>
<div class="t" style="left:1126px;top:210px">X</div><div class="f" style="left:1141px;top:210px;width:136px">-90</div><div class="t" style="left:1285px;top:210px">Y</div><div class="f" style="left:1300px;top:210px;width:137px">0</div><div class="t" style="left:1445px;top:210px">Z</div><div class="f" style="left:1460px;top:210px;width:136px">0</div>
<div class="t" style="left:1117px;top:229px">Scale</div>
<div class="t" style="left:1126px;top:248px">X</div><div class="f" style="left:1141px;top:248px;width:136px">1.024762</div><div class="t" style="left:1285px;top:248px">Y</div><div class="f" style="left:1300px;top:248px;width:137px">1</div><div class="t" style="left:1445px;top:248px">Z</div><div class="f" style="left:1460px;top:248px;width:136px">-1.159276</div>
<div class="ln" style="top:267px"></div>
<!-- mesh filter -->
<svg style="left:1115px;top:273px" width="8" height="9"><use href="#tr" width="8" height="9"/></svg>
<svg style="left:1129px;top:271px" width="13" height="14"><rect width="13" height="14" fill="#7aa6e0"/><path d="M4 0V14M9 0V14M0 4H13M0 9H13" stroke="#e8f0fa"/></svg>
<div class="t b" style="left:1163px;top:270px">Plane (Mesh Filter)</div>
<svg style="left:1563px;top:271px" width="13" height="14"><use href="#help" width="13" height="14"/></svg><svg style="left:1581px;top:271px" width="14" height="13"><use href="#gear" width="14" height="13"/></svg>
<div class="ln" style="top:286px"></div>
<!-- mesh collider -->
<svg style="left:1115px;top:293px" width="9" height="8"><use href="#td" width="9" height="8"/></svg>
<svg style="left:1129px;top:290px" width="13" height="14"><rect width="13" height="14" fill="#7ac08a"/><path d="M4 0V14M9 0V14M0 4H13M0 9H13" stroke="#3a6ad0"/></svg>
<div class="cb ck" style="left:1147px;top:291px"></div><svg style="left:1147px;top:291px" width="12" height="12"><use href="#tick" width="12" height="12"/></svg>
<div class="t b" style="left:1163px;top:289px">Mesh Collider</div>
<svg style="left:1563px;top:290px" width="13" height="14"><use href="#help" width="13" height="14"/></svg><svg style="left:1581px;top:290px" width="14" height="13"><use href="#gear" width="14" height="13"/></svg>
<div class="t" style="left:1117px;top:306px">Is Trigger</div><div class="cb" style="left:1265px;top:309px"></div>
<div class="t" style="left:1117px;top:325px">Material</div><div class="f" style="left:1264px;top:325px;width:314px;line-height:17px">None (Physic Material)</div><svg style="left:1585px;top:329px" width="8" height="8"><use href="#dot" width="8" height="8"/></svg>
<div class="t" style="left:1117px;top:344px">Convex</div><div class="cb" style="left:1265px;top:347px"></div>
<div class="t" style="left:1117px;top:363px;width:147px;overflow:hidden">Smooth Sphere Collisions</div><div class="cb" style="left:1265px;top:366px"></div>
<div class="t" style="left:1117px;top:382px">Mesh</div><div class="f" style="left:1264px;top:382px;width:314px;padding-left:15px;line-height:16px">Plane</div><svg style="left:1268px;top:386px" width="9" height="9"><path d="M2.500 0V9M6.500 0V9M0 2.500H9M0 6.500H9" stroke="#555"/></svg><svg style="left:1585px;top:386px" width="8" height="8"><use href="#dot" width="8" height="8"/></svg>
<div class="ln" style="top:401px"></div>
<!-- mesh renderer -->
<svg style="left:1115px;top:408px" width="9" height="8"><use href="#td" width="9" height="8"/></svg>
<svg style="left:1129px;top:405px" width="13" height="14"><rect width="13" height="14" fill="#7aa6e0"/><path d="M4 0V14M9 0V14M0 4H13M0 9H13" stroke="#e8f0fa"/><path d="M1 9 6 5 12 9 6 13z" fill="#333"/></svg>
<div class="cb ck" style="left:1147px;top:406px"></div><svg style="left:1147px;top:406px" width="12" height="12"><use href="#tick" width="12" height="12"/></svg>
<div class="t b" style="left:1163px;top:404px">Mesh Renderer</div>
<svg style="left:1563px;top:405px" width="13" height="14"><use href="#help" width="13" height="14"/></svg><svg style="left:1581px;top:405px" width="14" height="13"><use href="#gear" width="14" height="13"/></svg>
<div class="t" style="left:1127px;top:419px">Cast Shadows</div><div class="cb ck" style="left:1371px;top:420px"></div><svg style="left:1371px;top:420px" width="12" height="12"><use href="#tick" width="12" height="12"/></svg>
<div class="t" style="left:1127px;top:435px">Receive Shadows</div><div class="cb ck" style="left:1371px;top:436px"></div><svg style="left:1371px;top:436px" width="12" height="12"><use href="#tick" width="12" height="12"/></svg>
<svg style="left:1112px;top:455px" width="9" height="8"><use href="#td" width="9" height="8"/></svg><div class="t" style="left:1127px;top:451px">Materials</div>
<div class="t" style="left:1142px;top:467px">Size</div><div class="t" style="left:1370px;top:466px">1</div>
<div class="t" style="left:1142px;top:483px">Element 0</div><svg style="left:1371px;top:484px" width="14" height="14"><use href="#ball" width="14" height="14"/></svg><div class="t" style="left:1387px;top:483px">factory</div><svg style="left:1584px;top:487px" width="8" height="8"><use href="#dot" width="8" height="8"/></svg>
<div class="t" style="left:1127px;top:499px">Use Light Probes</div><div class="cb" style="left:1370px;top:500px"></div>
<div class="ln" style="top:520px"></div>
<!-- material -->
<div style="left:1111px;top:521px;width:489px;height:46px;background:#d6d6d6;border-bottom:1px solid #8a8a8a;box-sizing:border-box"></div>
<svg style="left:1114px;top:525px" width="41" height="38"><rect width="41" height="38" fill="#d0d0d0"/><path d="M19 0 29 8 33 25 38 22 29 35 21 37 18 28 14 37 8 33 3 25 11 28 14 24 16 30 22 20 22 10z" fill="#000"/></svg>
<div class="t" style="left:1163px;top:528px;font-size:12px">factory</div>
<svg style="left:1563px;top:526px" width="13" height="14"><use href="#help" width="13" height="14"/></svg><svg style="left:1581px;top:526px" width="14" height="13"><use href="#gear" width="14" height="13"/></svg>
<div class="t" style="left:1163px;top:547px;font-size:10px;letter-spacing:.2px">Shader</div>
<div class="dd" style="left:1204px;top:547px;width:345px;line-height:16px">Unlit/Transparent Cutout</div><div class="arr" style="left:1538px;top:551px;font-size:5px">▼</div>
<div class="dd" style="left:1553px;top:547px;width:41px;line-height:16px">Edit...</div>
<div class="t" style="left:1117px;top:572px">Base (RGB) Trans (A)</div>
<div class="t" style="left:1252px;top:595px;font-size:10px">Tiling</div><div class="t" style="left:1390px;top:595px;font-size:10px">Offset</div>
<div class="t" style="left:1236px;top:614px;font-size:10px">x</div><div class="f" style="left:1247px;top:615px;width:135px;height:13px;line-height:11px;font-size:10px">1</div><div class="f" style="left:1384px;top:615px;width:135px;height:13px;line-height:11px;font-size:10px">0</div>
<div class="t" style="left:1236px;top:632px;font-size:10px">y</div><div class="f" style="left:1247px;top:631px;width:135px;height:13px;line-height:11px;font-size:10px">1</div><div class="f" style="left:1384px;top:631px;width:135px;height:13px;line-height:11px;font-size:10px">0</div>
<div style="left:1521px;top:572px;width:73px;height:73px;background:#000;border:2px solid #666;box-sizing:border-box"></div>
<div style="left:1583px;top:575px;width:9px;height:15px;background:#fff"></div><div style="left:1570px;top:575px;width:13px;height:2px;background:#fff"></div>
<div style="left:1562px;top:633px;width:32px;height:12px;background:#fff;font-size:10.500px;line-height:14px;letter-spacing:.2px;text-align:left;overflow:hidden">Select</div>
<div class="t" style="left:1117px;top:661px">Alpha cutoff</div>
<div style="left:1521px;top:668px;width:75px;height:4px;border-radius:2px;background:linear-gradient(#888,#ddd)"></div>
<div style="left:1554px;top:665px;width:9px;height:9px;border-radius:50%;background:#e8e8e8;border:1px solid #777"></div>
</body></html>
